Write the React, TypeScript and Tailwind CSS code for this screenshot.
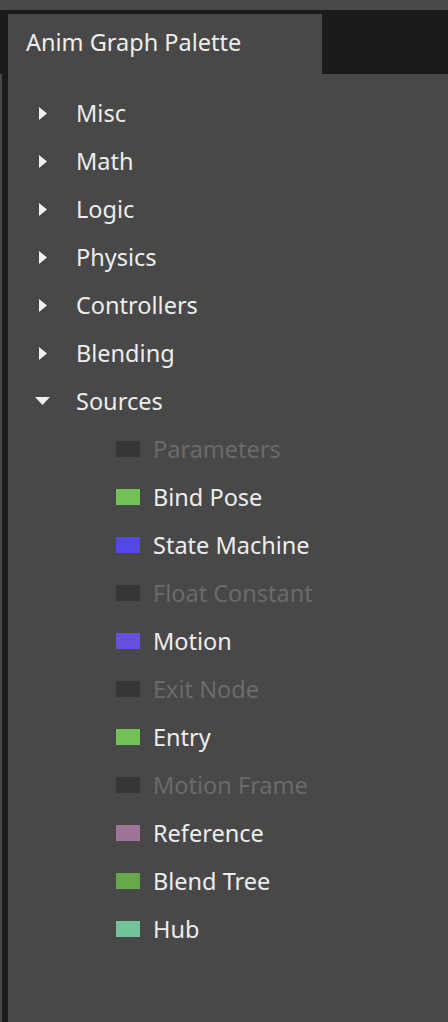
import React from "react";

type Category = {
  name: string;
  open?: boolean;
};

type Source = {
  name: string;
  color: string;
  disabled?: boolean;
};

const categories: Category[] = [
  { name: "Misc" },
  { name: "Math" },
  { name: "Logic" },
  { name: "Physics" },
  { name: "Controllers" },
  { name: "Blending" },
  { name: "Sources", open: true },
];

const sources: Source[] = [
  { name: "Parameters", color: "#363636", disabled: true },
  { name: "Bind Pose", color: "#72c155" },
  { name: "State Machine", color: "#5448e4" },
  { name: "Float Constant", color: "#363636", disabled: true },
  { name: "Motion", color: "#664fdf" },
  { name: "Exit Node", color: "#363636", disabled: true },
  { name: "Entry", color: "#72c155" },
  { name: "Motion Frame", color: "#363636", disabled: true },
  { name: "Reference", color: "#9e7598" },
  { name: "Blend Tree", color: "#67a94a" },
  { name: "Hub", color: "#72c59b" },
];

const Arrow = ({ open }: { open?: boolean }) => (
  <span className="flex h-[48px] w-[15px] items-center justify-center">
    {open ? (
      <svg width="15" height="8" viewBox="0 0 15 8" aria-hidden="true">
        <polygon points="0,0 15,0 7.5,8" fill="#f0f0f0" />
      </svg>
    ) : (
      <svg width="8" height="13" viewBox="0 0 8 13" aria-hidden="true">
        <polygon points="0,0 8,6.5 0,13" fill="#f0f0f0" />
      </svg>
    )}
  </span>
);

export default function App() {
  return (
    <div
      className="flex h-[1022px] w-[448px] flex-col overflow-hidden bg-[#1b1b1b] text-[23.5px] text-[#ededed]"
      style={{ fontFamily: '"Noto Sans", "Open Sans", sans-serif' }}
    >
      <div className="h-[10px] shrink-0 bg-[#484848]" />
      <div className="flex h-[64px] shrink-0 items-end pl-[8px]">
        <div className="flex h-[60px] w-[314px] items-center bg-[#484848] pb-[2px] pl-[18px] leading-none">
          Anim Graph Palette
        </div>
      </div>
      <div className="flex flex-1">
        <div className="w-[2px] bg-[#484848]" />
        <div className="w-[6px]" />
        <div className="flex-1 bg-[#484848] pt-[15px]">
          {categories.map((c) => (
            <div key={c.name}>
              <div className="flex h-[48px] items-center pl-[27px]">
                <Arrow open={c.open} />
                <span className="ml-[26px] leading-[48px]">{c.name}</span>
              </div>
              {c.open &&
                sources.map((s) => (
                  <div
                    key={s.name}
                    className="flex h-[48px] items-center pl-[108px]"
                  >
                    <span
                      className="h-[16px] w-[24px] shrink-0"
                      style={{ backgroundColor: s.color }}
                    />
                    <span
                      className={
                        s.disabled
                          ? "ml-[13px] leading-[48px] text-[#6b6b6b]"
                          : "ml-[13px] leading-[48px]"
                      }
                    >
                      {s.name}
                    </span>
                  </div>
                ))}
            </div>
          ))}
        </div>
      </div>
    </div>
  );
}
